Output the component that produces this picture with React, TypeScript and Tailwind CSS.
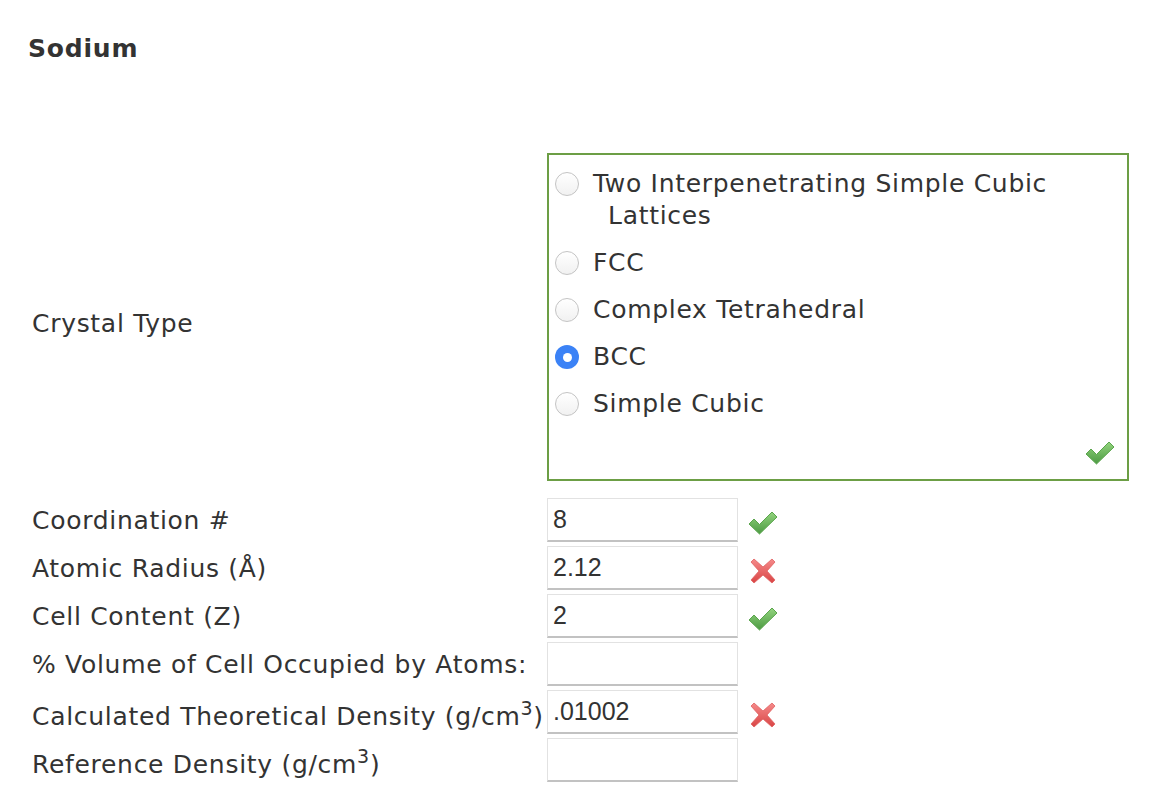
import { useState } from 'react';

const crystalOptions = [
  { id: 'tisc', lines: ['Two Interpenetrating Simple Cubic', 'Lattices'] },
  { id: 'fcc', lines: ['FCC'] },
  { id: 'ct', lines: ['Complex Tetrahedral'] },
  { id: 'bcc', lines: ['BCC'] },
  { id: 'sc', lines: ['Simple Cubic'] },
];

function CheckMark() {
  return (
    <svg width="32" height="28" viewBox="0 0 32 28">
      <defs>
        <linearGradient id="ck" x1="0" y1="0" x2="0" y2="1">
          <stop offset="0" stopColor="#93d47e" />
          <stop offset="1" stopColor="#4c9a43" />
        </linearGradient>
      </defs>
      <path
        d="M2 15 L7 10 L12.5 15.5 L25 3 L30 8 L12.5 25 Z"
        fill="url(#ck)"
        stroke="#5aa54c"
        strokeWidth="1"
        strokeLinejoin="round"
      />
    </svg>
  );
}

function CrossMark() {
  return (
    <svg width="28" height="28" viewBox="0 0 28 28">
      <defs>
        <linearGradient id="cx" x1="0" y1="0" x2="0" y2="1">
          <stop offset="0" stopColor="#f58a8a" />
          <stop offset="1" stopColor="#d94545" />
        </linearGradient>
      </defs>
      <path
        d="M5 2 L14 10 L23 2 L26 5 L18 14 L26 23 L23 26 L14 18 L5 26 L2 23 L10 14 L2 5 Z"
        fill="url(#cx)"
        stroke="#e06060"
        strokeWidth="0.8"
        strokeLinejoin="round"
      />
    </svg>
  );
}

function Radio({ checked }: { checked: boolean }) {
  if (checked) {
    return (
      <span className="w-[24px] h-[24px] rounded-full bg-[#3b82f6] flex items-center justify-center shrink-0">
        <span className="w-[9px] h-[9px] rounded-full bg-white" />
      </span>
    );
  }
  return (
    <span className="w-[24px] h-[24px] rounded-full border border-[#c4c4c4] bg-gradient-to-b from-white to-[#f1f1f1] shrink-0" />
  );
}

interface Row {
  label: React.ReactNode;
  value: string;
  status?: 'ok' | 'bad';
  lower?: boolean;
}

const sup = <span className="relative -top-[10px] text-[19px] leading-none">3</span>;

const rows: Row[] = [
  { label: 'Coordination #', value: '8', status: 'ok' },
  { label: 'Atomic Radius (Å)', value: '2.12', status: 'bad' },
  { label: 'Cell Content (Z)', value: '2', status: 'ok' },
  { label: '% Volume of Cell Occupied by Atoms:', value: '' },
  {
    label: <>Calculated Theoretical Density (g/cm{sup})</>,
    value: '.01002',
    status: 'bad',
    lower: true,
  },
  {
    label: <>Reference Density (g/cm{sup})</>,
    value: '',
    lower: true,
  },
];

export default function App() {
  const [crystal, setCrystal] = useState('bcc');

  return (
    <div className="w-[1174px] h-[809px] bg-white text-[#333] font-['DejaVu_Sans',Verdana,sans-serif] text-[25px] tracking-[0.7px] overflow-hidden">
      <h2 className="pl-[28px] pt-[33px] font-bold text-[25px] tracking-[0.8px] leading-[32px] text-[#333]">Sodium</h2>

      <div className="pl-[32px] mt-[88px]">
        {/* Crystal type */}
        <div className="flex items-center">
          <div className="w-[515px] leading-[32px] pt-[14px]">Crystal Type</div>
          <div className="w-[582px] h-[328px] border-2 border-[#6c9e45] pl-[6px] pt-[13px] pr-[10px] flex flex-col">
            <div className="flex flex-col gap-[15px]">
              {crystalOptions.map((opt) => (
                <label
                  key={opt.id}
                  className="flex items-start gap-[14px] cursor-pointer"
                  onClick={() => setCrystal(opt.id)}
                >
                  <span className="h-[32px] flex items-center">
                    <Radio checked={crystal === opt.id} />
                  </span>
                  <span className="leading-[32px]">
                    {opt.lines.map((l, i) => (
                      <span key={i} className={`block ${i > 0 ? 'pl-[15px]' : ''}`}>
                        {l}
                      </span>
                    ))}
                  </span>
                </label>
              ))}
            </div>
            <div className="mt-auto mb-[12px] flex justify-end pr-[1px]">
              <CheckMark />
            </div>
          </div>
        </div>

        {/* Inputs */}
        <div className="mt-[17px] flex flex-col gap-[4px]">
          {rows.map((r, i) => (
            <div key={i} className="flex items-center h-[44px]">
              <div className={`w-[515px] leading-[32px] whitespace-nowrap ${r.lower ? 'pt-[9px]' : 'pt-[2px]'}`}>
                {r.label}
              </div>
              <input
                defaultValue={r.value}
                className="w-[191px] h-[44px] border border-[#e2e2e2] border-b-2 border-b-[#c2c2c2] px-[5px] font-['Liberation_Sans',Arial,sans-serif] text-[25px] tracking-normal text-[#333] outline-none"
              />
              <div className="ml-[8px] w-[34px] flex items-center justify-center mt-[6px]">
                {r.status === 'ok' && <CheckMark />}
                {r.status === 'bad' && <CrossMark />}
              </div>
            </div>
          ))}
        </div>
      </div>
    </div>
  );
}
